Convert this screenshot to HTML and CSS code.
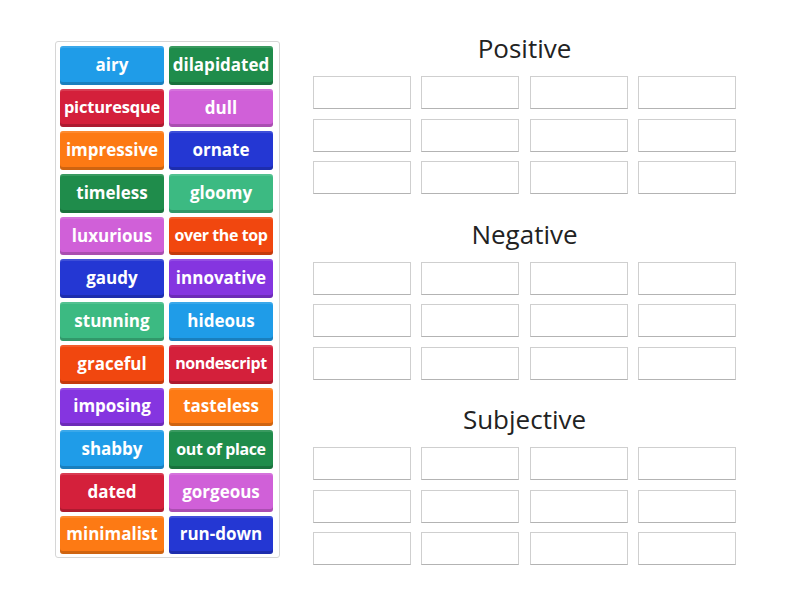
FILE: index.html
```html
<!DOCTYPE html>
<html>
<head>
<meta charset="utf-8">
<link rel="stylesheet" href="styles.css">
</head>
<body>
<div class="page">
  <div class="bank">
    <div class="tile c-sky">airy</div>
    <div class="tile c-forest">dilapidated</div>
    <div class="tile c-red long">picturesque</div>
    <div class="tile c-orchid">dull</div>
    <div class="tile c-orange">impressive</div>
    <div class="tile c-navy">ornate</div>
    <div class="tile c-forest">timeless</div>
    <div class="tile c-mint">gloomy</div>
    <div class="tile c-orchid">luxurious</div>
    <div class="tile c-flame small">over the top</div>
    <div class="tile c-navy">gaudy</div>
    <div class="tile c-violet">innovative</div>
    <div class="tile c-mint">stunning</div>
    <div class="tile c-sky">hideous</div>
    <div class="tile c-flame">graceful</div>
    <div class="tile c-red small">nondescript</div>
    <div class="tile c-violet">imposing</div>
    <div class="tile c-orange">tasteless</div>
    <div class="tile c-sky">shabby</div>
    <div class="tile c-forest small">out of place</div>
    <div class="tile c-red">dated</div>
    <div class="tile c-orchid">gorgeous</div>
    <div class="tile c-orange">minimalist</div>
    <div class="tile c-navy">run-down</div>
  </div>
  <div class="groups">
    <section class="group">
      <h2 class="title">Positive</h2>
      <div class="slots">
        <div class="slot"></div><div class="slot"></div><div class="slot"></div><div class="slot"></div>
        <div class="slot"></div><div class="slot"></div><div class="slot"></div><div class="slot"></div>
        <div class="slot"></div><div class="slot"></div><div class="slot"></div><div class="slot"></div>
      </div>
    </section>
    <section class="group">
      <h2 class="title">Negative</h2>
      <div class="slots">
        <div class="slot"></div><div class="slot"></div><div class="slot"></div><div class="slot"></div>
        <div class="slot"></div><div class="slot"></div><div class="slot"></div><div class="slot"></div>
        <div class="slot"></div><div class="slot"></div><div class="slot"></div><div class="slot"></div>
      </div>
    </section>
    <section class="group">
      <h2 class="title">Subjective</h2>
      <div class="slots">
        <div class="slot"></div><div class="slot"></div><div class="slot"></div><div class="slot"></div>
        <div class="slot"></div><div class="slot"></div><div class="slot"></div><div class="slot"></div>
        <div class="slot"></div><div class="slot"></div><div class="slot"></div><div class="slot"></div>
      </div>
    </section>
  </div>
</div>
</body>
</html>
```
FILE: styles.css
```css
* { box-sizing: border-box; }
html, body { margin: 0; padding: 0; background: #fff; }
body { font-family: "Open Sans", "Liberation Sans", sans-serif; }

.page {
  display: flex;
  align-items: flex-start;
  padding: 41px 0 0 55px;
}

.bank {
  width: 225px;
  border: 1px solid #d6d6d6;
  border-radius: 3px;
  padding: 4px 5px 3px 4px;
  display: grid;
  grid-template-columns: 104px 104px;
  grid-auto-rows: 38.7px;
  column-gap: 5px;
  row-gap: 4px;
}

.tile {
  border-radius: 3px;
  color: #fff;
  font-weight: 700;
  font-size: 17px;
  line-height: 1;
  display: flex;
  align-items: center;
  justify-content: center;
  white-space: nowrap;
  padding-bottom: 2px;
  box-shadow: inset 0 -3px 0 rgba(0,0,0,0.18), inset 0 2px 0 rgba(255,255,255,0.12);
}
.tile.long { font-size: 16.5px; letter-spacing: -0.2px; }
.tile.small { font-size: 16px; letter-spacing: -0.4px; }

.c-sky { background: #1f9ce8; }
.c-forest { background: #1f8c4b; }
.c-red { background: #d4203b; }
.c-orchid { background: #d060d8; }
.c-orange { background: #fd7a14; }
.c-navy { background: #2437d3; }
.c-mint { background: #3cba82; }
.c-flame { background: #f1470f; }
.c-violet { background: #8535e0; }

.groups {
  margin-left: 33px;
  margin-top: -10px;
  width: 423px;
  display: flex;
  flex-direction: column;
}

.group { height: 185.5px; }

.title {
  margin: 0;
  height: 45px;
  font-size: 26px;
  font-weight: 400;
  color: #222;
  text-align: center;
  line-height: 34px;
}

.slots {
  display: grid;
  grid-template-columns: repeat(4, 98px);
  grid-auto-rows: 33px;
  column-gap: 10.3px;
  row-gap: 9.5px;
}

.slot {
  border: 1px solid #cfcfcf;
  border-bottom-color: #b3b3b3;
  background: #fff;
}
```
